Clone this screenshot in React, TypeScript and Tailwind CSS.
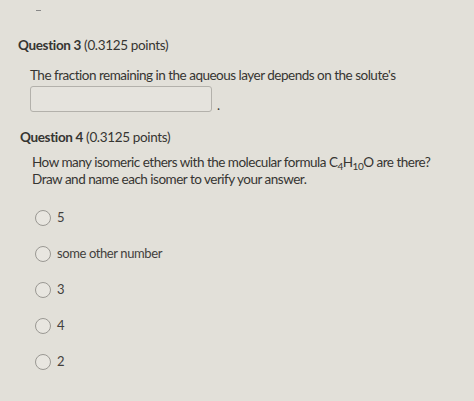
import React from "react";

function Radio({ label }: { label: string }) {
  return (
    <div className="flex items-center h-[18px] gap-[6px]">
      <span className="w-[16px] h-[16px] rounded-full border border-[#9a9893] bg-[#e8e6e0] shrink-0" />
      <span className="text-[13px] tracking-[-0.4px] text-[#42403d]">{label}</span>
    </div>
  );
}

export default function App() {
  return (
    <div
      className="w-[474px] h-[401px] bg-[#e2e0d9] text-[#363532] overflow-hidden relative"
      style={{ fontFamily: "Lato, 'Noto Sans', sans-serif" }}
    >
      <div className="absolute left-[36px] top-[10px] w-[5px] h-[1px] bg-[#888]" />
      <div className="pt-[36px] pl-[18px]">
        <div className="text-[13.5px] tracking-[-0.35px] leading-[18px]">
          <span className="font-bold">Question 3</span> (0.3125 points)
        </div>
        <div className="pl-[12px] mt-[12px]">
          <div className="text-[13.5px] tracking-[-0.5px] leading-[18px]">
            The fraction remaining in the aqueous layer depends on the solute's
          </div>
          <div className="flex items-end mt-[2px]">
            <div className="w-[182px] h-[26px] rounded-[3px] border border-[#b3b1ab] bg-[#e5e3dd]" />
            <span className="ml-[5px] text-[13px] leading-[14px]">.</span>
          </div>
        </div>
        <div className="text-[13.5px] tracking-[-0.35px] leading-[18px] mt-[16px] pl-[2px]">
          <span className="font-bold">Question 4</span> (0.3125 points)
        </div>
        <div className="pl-[14px] mt-[8px] text-[13.5px] tracking-[-0.5px] leading-[17px]">
          <div>
            How many isomeric ethers with the molecular formula C<sub className="text-[10px]">4</sub>H<sub className="text-[10px]">10</sub>O are there?
          </div>
          <div>Draw and name each isomer to verify your answer.</div>
        </div>
        <div className="pl-[17px] mt-[21px] flex flex-col gap-[18px]">
          <Radio label="5" />
          <Radio label="some other number" />
          <Radio label="3" />
          <Radio label="4" />
          <Radio label="2" />
        </div>
      </div>
    </div>
  );
}
